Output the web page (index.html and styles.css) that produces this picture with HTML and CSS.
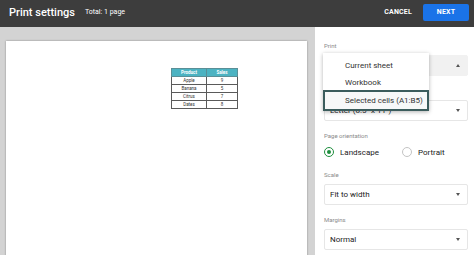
FILE: index.html
```html
<!DOCTYPE html>
<html>
<head>
<meta charset="utf-8">
<link rel="stylesheet" href="styles.css">
</head>
<body>
<div class="app">
  <header class="topbar">
    <span class="title">Print settings</span>
    <span class="total">Total: 1 page</span>
    <span class="spacer"></span>
    <span class="cancel">CANCEL</span>
    <span class="next">NEXT</span>
  </header>
  <div class="main">
    <div class="preview">
      <div class="page">
        <table class="sheet">
          <tr><th>Product</th><th>Sales</th></tr>
          <tr><td>Apple</td><td>9</td></tr>
          <tr><td>Banana</td><td>5</td></tr>
          <tr><td>Citrus</td><td>7</td></tr>
          <tr><td>Dates</td><td>8</td></tr>
        </table>
      </div>
    </div>
    <div class="panel">
      <div class="field">
        <div class="label">Print</div>
        <div class="select open"><span></span><span class="caret up"></span></div>
      </div>
      <div class="field">
        <div class="label"></div>
        <div class="select"><span>Letter (8.5" x 11")</span><span class="caret"></span></div>
      </div>
      <div class="field">
        <div class="label">Page orientation</div>
        <div class="radios">
          <span class="opt"><span class="radio on"></span>Landscape</span>
          <span class="opt"><span class="radio"></span>Portrait</span>
        </div>
      </div>
      <div class="field">
        <div class="label">Scale</div>
        <div class="select"><span>Fit to width</span><span class="caret"></span></div>
      </div>
      <div class="field">
        <div class="label">Margins</div>
        <div class="select"><span>Normal</span><span class="caret"></span></div>
      </div>
      <div class="menu">
        <div class="item">Current sheet</div>
        <div class="item">Workbook</div>
        <div class="item selected">Selected cells (A1:B5)</div>
      </div>
    </div>
  </div>
</div>
</body>
</html>
```

FILE: styles.css
```css
* { box-sizing: border-box; }
html, body { margin: 0; padding: 0; }
body {
  width: 474px;
  height: 255px;
  overflow: hidden;
  font-family: Roboto, "Liberation Sans", sans-serif;
  background: #fff;
}
.app { display: flex; flex-direction: column; height: 255px; }

.topbar {
  height: 27px;
  flex: none;
  background: #3d3d3d;
  display: flex;
  align-items: center;
  padding: 0 5px 3px 9px;
  color: #fff;
}
.title { font-size: 11px; font-weight: 500; margin-right: 10px; }
.total { font-size: 7px; }
.spacer { flex: 1; }
.cancel { font-size: 7px; font-weight: 700; letter-spacing: 0.2px; margin-right: 11px; }
.next {
  width: 46px;
  height: 17px;
  background: #1a73e8;
  border-radius: 2px;
  font-size: 7px;
  font-weight: 700;
  display: flex;
  align-items: center;
  justify-content: center;
  letter-spacing: 0.2px;
}

.main { flex: 1; display: flex; min-height: 0; }
.preview {
  width: 315px;
  flex: none;
  background: #d3d3d3;
  padding: 14px 8px 0 6px;
  overflow: hidden;
}
.page {
  height: 240px;
  background: #fff;
  box-shadow: 0 0 2px rgba(0,0,0,0.35);
  padding: 27px 0 0 165px;
}
.sheet {
  border-collapse: collapse;
  width: 67px;
  font-size: 4.5px;
  color: #333;
}
.sheet th, .sheet td {
  border: 1px solid #5a5a5a;
  height: 8px;
  padding: 0;
  text-align: center;
  line-height: 6px;
}
.sheet th { background: #4cb3c2; color: #fff; font-weight: 700; border-color: #5a8f97; }
.sheet th:first-child, .sheet td:first-child { width: 35px; }

.panel {
  flex: 1;
  position: relative;
  padding: 15px 6px 0 9px;
  background: #fff;
}
.label {
  font-size: 6px;
  height: 8px;
  line-height: 8px;
  color: #8a8a8a;
  margin-bottom: 5px;
}
.select {
  height: 21px;
  border: 1px solid #e6e6e6;
  border-radius: 2px;
  display: flex;
  align-items: center;
  justify-content: space-between;
  padding: 0 7px 0 5px;
  font-size: 8px;
  color: #222;
  margin-bottom: 11px;
}
.select.open { background: #f1f1f1; border-color: #f1f1f1; }
.caret {
  width: 0;
  height: 0;
  border-left: 2.5px solid transparent;
  border-right: 2.5px solid transparent;
  border-top: 3px solid #555;
}
.caret.up { border-top: 0; border-bottom: 3px solid #555; }

.radios {
  display: flex;
  align-items: center;
  height: 14px;
  margin-bottom: 12px;
  font-size: 8px;
  color: #222;
  gap: 23px;
}
.opt { display: flex; align-items: center; }
.radio {
  width: 10px;
  height: 10px;
  border-radius: 50%;
  border: 1.5px solid #c4c4c4;
  margin-right: 6px;
  display: flex;
  align-items: center;
  justify-content: center;
}
.radio.on { border-color: #1e8e3e; }
.radio.on::after {
  content: "";
  width: 4px;
  height: 4px;
  border-radius: 50%;
  background: #1e8e3e;
}

.menu {
  position: absolute;
  left: 8px;
  top: 26px;
  width: 106px;
  height: 58px;
  background: #fff;
  box-shadow: 0 1px 4px rgba(0,0,0,0.3);
  padding-top: 4px;
  font-size: 8px;
  color: #333;
}
.item { height: 17px; line-height: 17px; padding-left: 22px; }
.item.selected {
  height: 21px;
  margin-top: -1px;
  border: 2px solid #3b5c5c;
  padding-left: 20px;
  background: #f7f8f8;
}
```
